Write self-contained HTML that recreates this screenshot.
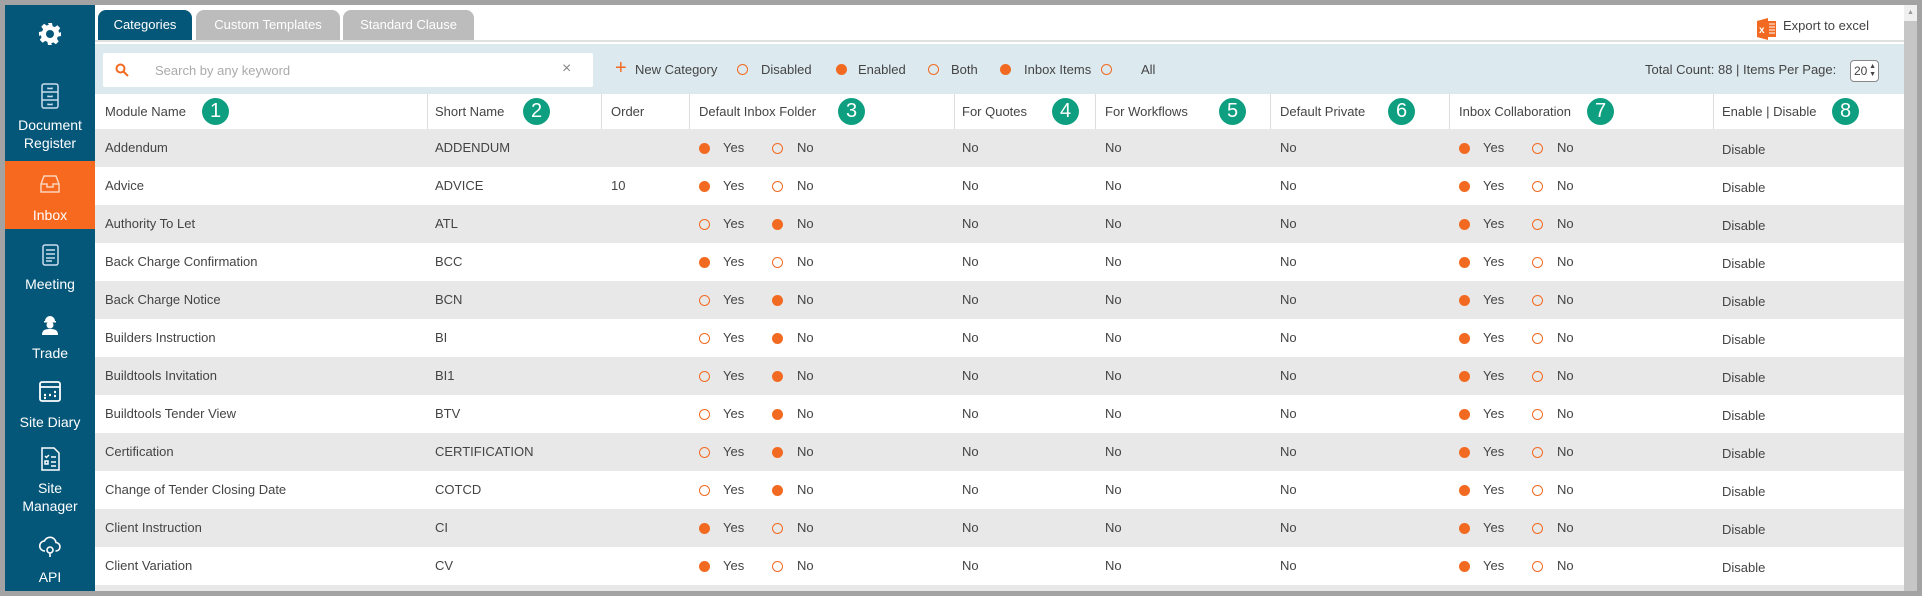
<!DOCTYPE html>
<html><head><meta charset="utf-8"><style>
*{margin:0;padding:0;box-sizing:border-box}
body{width:1922px;height:596px;background:#a3a3a3;font-family:"Liberation Sans",sans-serif;font-size:13px;color:#444;position:relative;overflow:hidden}
.a{position:absolute;white-space:nowrap}
#side{position:absolute;left:5px;top:5px;width:90px;height:586px;background:#05577a}
.si{position:absolute;left:0;width:90px;text-align:center;color:#fff;font-size:14px;line-height:18px}
#main{position:absolute;left:95px;top:5px;width:1809px;height:586px;background:#fff;overflow:hidden}
.tab{position:absolute;top:5px;height:30px;border-radius:8px 8px 0 0;color:#fff;font-size:13px;line-height:30px;text-align:center}
.row{position:absolute;left:0;width:1809px;height:38px}
.g{background:#e8e8e8}
.c{position:absolute;top:0;line-height:38px;white-space:nowrap}
.dot{position:absolute;width:11px;height:11px;border-radius:50%;border:1.5px solid #f26a21}
.f{background:#f26a21}
.b{position:absolute;width:27px;height:27px;border-radius:50%;background:#0e9f80;color:#fff;font-size:20px;line-height:27px;text-align:center;top:11px}
.vl{position:absolute;top:0;width:1px;height:35px;background:#ddd}
</style></head><body>
<div id="side">
<svg class="a" style="left:33px;top:17px" width="24" height="24" viewBox="0 0 24 24"><path fill="#fff" d="M10 1h4l.6 3.1 2.2 1 2.6-1.8 2.8 2.8-1.8 2.6 1 2.2L23 10v4l-3.1.6-1 2.2 1.8 2.6-2.8 2.8-2.6-1.8-2.2 1L14 23h-4l-.6-3.1-2.2-1-2.6 1.8-2.8-2.8 1.8-2.6-1-2.2L1 14v-4l3.1-.6 1-2.2-1.8-2.6 2.8-2.8 2.6 1.8 2.2-1z"/><circle cx="12" cy="12" r="4" fill="#05577a"/></svg>
<svg class="a" style="left:36px;top:78px" width="18" height="26" viewBox="0 0 18 26" fill="none" stroke="#cde" stroke-width="1.5"><rect x="1" y="1" width="16" height="24" rx="2"/><path d="M1 9h16M1 17h16M7 4.5v1h4v-1M7 12.5v1h4v-1M7 20.5v1h4v-1"/></svg>
<div class="si" style="top:111px">Document<br>Register</div>
<div class="a" style="left:0;top:156px;width:90px;height:68px;background:#f7691f"></div>
<svg class="a" style="left:34px;top:170px" width="22" height="18" viewBox="0 0 22 18" fill="none" stroke="#fcd3bb" stroke-width="1.5"><path d="M2 9L5 1h12l3 8v8H2z M2 9h6v3h6V9h6"/></svg>
<div class="si" style="top:201px">Inbox</div>
<svg class="a" style="left:37px;top:239px" width="17" height="22" viewBox="0 0 17 22" fill="none" stroke="#cde" stroke-width="1.5"><rect x="1" y="1" width="15" height="20" rx="2"/><path d="M4 6h9M4 10h9M4 14h9M4 17h6"/></svg>
<div class="si" style="top:270px">Meeting</div>
<svg class="a" style="left:35px;top:308px" width="20" height="22" viewBox="0 0 20 22" fill="#fff"><path d="M5 8a5 5 0 0 1 10 0zM4 8h12v1.5H4z"/><circle cx="10" cy="12" r="3.5"/><path d="M2 22c0-5 3-6 8-6s8 1 8 6z"/></svg>
<div class="si" style="top:339px">Trade</div>
<svg class="a" style="left:34px;top:375px" width="22" height="22" viewBox="0 0 22 22" fill="none" stroke="#fff" stroke-width="1.8"><rect x="1" y="2" width="20" height="19" rx="2"/><path d="M1 7h20"/><path d="M5 15h2M10 15h2M15 12h2M15 16h2M5 18h2" stroke-width="2.2"/></svg>
<div class="si" style="top:408px">Site Diary</div>
<svg class="a" style="left:36px;top:442px" width="19" height="24" viewBox="0 0 19 24" fill="none" stroke="#fff" stroke-width="1.5"><path d="M1 1h12l5 5v17H1z"/><path d="M4 9l1.5 1.5L8 8M10 10h5M4 14h3v3H4zM10 15h5M10 19h5"/></svg>
<div class="si" style="top:474px">Site<br>Manager</div>
<svg class="a" style="left:33px;top:529px" width="24" height="24" viewBox="0 0 24 24" fill="none" stroke="#fff" stroke-width="1.6"><path d="M7 17a5 5 0 0 1-.5-10 6 6 0 0 1 11.5 1.5 4 4 0 0 1-.5 8.5"/><circle cx="12" cy="16" r="3"/><path d="M12 19v4"/></svg>
<div class="si" style="top:563px">API</div>
</div>
<div id="main">
<div class="tab" style="left:3px;width:94px;background:#05577a">Categories</div>
<div class="tab" style="left:101px;width:144px;background:#bcbcbc">Custom Templates</div>
<div class="tab" style="left:248px;width:131px;background:#bcbcbc">Standard Clause</div>
<div class="a" style="left:0;top:35px;width:1809px;height:2px;background:#e0e0e0"></div>
<svg class="a" style="left:1662px;top:13px" width="20" height="22" viewBox="0 0 20 22"><path fill="#f26a21" d="M0 3l11-3v22L0 19z"/><rect x="11" y="3" width="8" height="16" fill="#f26a21"/><path d="M12 6h6M12 9h6M12 12h6M12 15h6" stroke="#fff" stroke-width="1"/><text x="2" y="15" font-size="10" font-weight="bold" fill="#fff" font-family="Liberation Sans">x</text></svg>
<div class="a" style="left:1688px;top:13px;font-size:13px;color:#444">Export to excel</div>
<div class="a" style="left:0;top:39px;width:1809px;height:50px;background:#dce9ef"></div>
<div class="a" style="left:8px;top:48px;width:490px;height:34px;background:#fff;border-radius:2px"></div>
<svg class="a" style="left:20px;top:58px" width="14" height="14" viewBox="0 0 14 14" fill="none" stroke="#f26a21" stroke-width="2"><circle cx="5.5" cy="5.5" r="4"/><path d="M8.5 8.5L13 13"/></svg>
<div class="a" style="left:60px;top:58px;color:#aaa">Search by any keyword</div>
<div class="a" style="left:467px;top:55px;color:#888;font-size:16px">×</div>
<div class="a" style="left:520px;top:52px;color:#f26a21;font-size:20px">+</div>
<div class="a" style="left:540px;top:57px">New Category</div>
<div class="dot" style="left:642px;top:59px"></div><div class="a" style="left:666px;top:57px">Disabled</div>
<div class="dot f" style="left:741px;top:59px"></div><div class="a" style="left:763px;top:57px">Enabled</div>
<div class="dot" style="left:833px;top:59px"></div><div class="a" style="left:856px;top:57px">Both</div>
<div class="dot f" style="left:905px;top:59px"></div><div class="a" style="left:929px;top:57px">Inbox Items</div>
<div class="dot" style="left:1006px;top:59px"></div><div class="a" style="left:1046px;top:57px">All</div>
<div class="a" style="left:1550px;top:57px">Total Count: 88 | Items Per Page:</div>
<div class="a" style="left:1755px;top:55px;width:29px;height:22px;border:1px solid #888;border-radius:4px;font-size:12px;line-height:20px;padding-left:3px;background:#fff">20<span style="font-size:7px;position:absolute;right:2px;top:2px;line-height:8px">▲<br>▼</span></div>
<div class="row" style="top:89px;height:35px">
<div class="c" style="left:10px;line-height:35px">Module Name</div><div class="b" style="left:107px;top:4px">1</div>
<div class="vl" style="left:332px"></div><div class="c" style="left:340px;line-height:35px">Short Name</div><div class="b" style="left:428px;top:4px">2</div>
<div class="vl" style="left:506px"></div><div class="c" style="left:516px;line-height:35px">Order</div>
<div class="vl" style="left:594px"></div><div class="c" style="left:604px;line-height:35px">Default Inbox Folder</div><div class="b" style="left:743px;top:4px">3</div>
<div class="vl" style="left:859px"></div><div class="c" style="left:867px;line-height:35px">For Quotes</div><div class="b" style="left:957px;top:4px">4</div>
<div class="vl" style="left:1000px"></div><div class="c" style="left:1010px;line-height:35px">For Workflows</div><div class="b" style="left:1124px;top:4px">5</div>
<div class="vl" style="left:1175px"></div><div class="c" style="left:1185px;line-height:35px">Default Private</div><div class="b" style="left:1293px;top:4px">6</div>
<div class="vl" style="left:1354px"></div><div class="c" style="left:1364px;line-height:35px">Inbox Collaboration</div><div class="b" style="left:1492px;top:4px">7</div>
<div class="vl" style="left:1618px"></div><div class="c" style="left:1627px;line-height:35px">Enable | Disable</div><div class="b" style="left:1737px;top:4px">8</div>
</div>
<div id="rows"></div>
</div>
<div class="a" style="left:1904px;top:5px;width:13px;height:586px;background:#c6c6c6"></div>
<div class="a" style="left:1904px;top:5px;width:13px;height:16px;background:#f0f0f0;color:#999;font-size:7px;text-align:center;line-height:16px">▲</div>
<script>
var d=[["Addendum","ADDENDUM","",1],["Advice","ADVICE","10",1],["Authority To Let","ATL","",0],["Back Charge Confirmation","BCC","",1],["Back Charge Notice","BCN","",0],["Builders Instruction","BI","",0],["Buildtools Invitation","BI1","",0],["Buildtools Tender View","BTV","",0],["Certification","CERTIFICATION","",0],["Change of Tender Closing Date","COTCD","",0],["Client Instruction","CI","",1],["Client Variation","CV","",1],["","","",-1]];
var h="";
d.forEach(function(r,i){
 var top=124+i*38;
 h+='<div class="row'+(i%2==0?' g':'')+'" style="top:'+top+'px">';
 if(r[3]>=0){
 h+='<div class="c" style="left:10px">'+r[0]+'</div><div class="c" style="left:340px">'+r[1]+'</div><div class="c" style="left:516px">'+r[2]+'</div>';
 h+='<div class="dot'+(r[3]?' f':'')+'" style="left:604px;top:14px"></div><div class="c" style="left:628px">Yes</div>';
 h+='<div class="dot'+(r[3]?'':' f')+'" style="left:677px;top:14px"></div><div class="c" style="left:702px">No</div>';
 h+='<div class="c" style="left:867px">No</div><div class="c" style="left:1010px">No</div><div class="c" style="left:1185px">No</div>';
 h+='<div class="dot f" style="left:1364px;top:14px"></div><div class="c" style="left:1388px">Yes</div>';
 h+='<div class="dot" style="left:1437px;top:14px"></div><div class="c" style="left:1462px">No</div>';
 h+='<div class="c" style="left:1627px;top:2px">Disable</div>';
 }
 h+='</div>';
});
document.getElementById("rows").outerHTML=h;
</script>
</body></html>
